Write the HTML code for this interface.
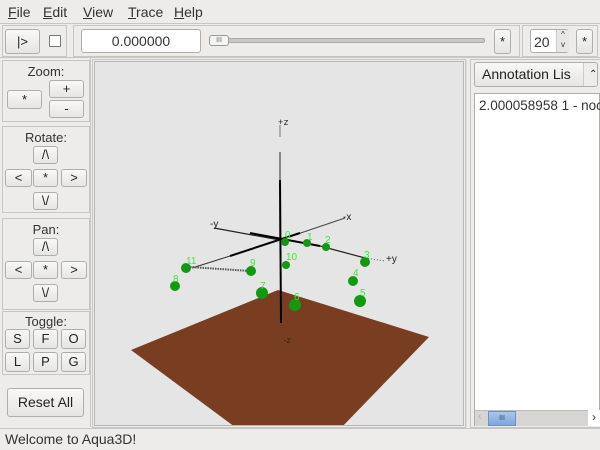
<!DOCTYPE html><html><head><style>
*{box-sizing:border-box}body{margin:0;width:600px;height:450px;background:#edeceb;font-family:"Liberation Sans",sans-serif;font-size:13px;color:#333;position:relative;overflow:hidden}
.a{position:absolute}
.btn{position:absolute;background:linear-gradient(#f8f8f7,#e6e5e3);border:1px solid #b0aeaa;border-radius:3px;text-align:center;font-size:13px;color:#222}
.grp{position:absolute;border:1px solid #c8c6c2;left:2px;width:88px}
.lbl{position:absolute;width:100%;text-align:center;font-size:13px}
u{text-decoration:underline}
</style></head><body>
<div class="a" style="left:0;top:0;width:600px;height:24px;background:#edecea;font-size:14px">
<span class="a" style="left:8px;top:4px"><u>F</u>ile</span><span class="a" style="left:43px;top:4px"><u>E</u>dit</span><span class="a" style="left:83px;top:4px"><u>V</u>iew</span><span class="a" style="left:128px;top:4px"><u>T</u>race</span><span class="a" style="left:174px;top:4px"><u>H</u>elp</span></div>
<div class="a" style="left:0;top:23px;width:600px;height:35px;border-top:1px solid #c8c6c2;border-bottom:1px solid #c8c6c2"></div>
<div class="a" style="left:2px;top:25px;width:65px;height:32px;border:1px solid #c8c6c2"></div>
<div class="a" style="left:73px;top:25px;width:447px;height:32px;border:1px solid #c8c6c2"></div>
<div class="a" style="left:522px;top:25px;width:76px;height:32px;border:1px solid #c8c6c2"></div>
<div class="btn" style="left:5px;top:29px;width:35px;height:25px;line-height:23px">|&gt;</div>
<div class="a" style="left:49px;top:35px;width:12px;height:12px;border:1px solid #777;background:#fff;border-radius:1px"></div>
<div class="a" style="left:81px;top:29px;width:120px;height:24px;border:1px solid #b0aeaa;border-radius:3px;background:#fff;text-align:center;line-height:22px;font-size:14px">0.000000</div>
<div class="a" style="left:210px;top:38px;width:275px;height:5px;background:#c9c8c5;border:1px solid #aaa;border-radius:2px"></div>
<div class="a" style="left:209px;top:35px;width:20px;height:11px;background:#f4f4f3;border:1px solid #999;border-radius:3px;font-size:7px;text-align:center;line-height:9px;color:#666">III</div>
<div class="btn" style="left:494px;top:29px;width:17px;height:25px;line-height:23px">*</div>
<div class="a" style="left:530px;top:29px;width:39px;height:24px;border:1px solid #b0aeaa;border-radius:3px;background:#fff"><span class="a" style="left:3px;top:4px;font-size:14px">20</span><div class="a" style="left:25px;top:0;width:13px;height:22px;background:#e8e7e5;border-left:1px solid #ccc;font-size:8px;text-align:center;line-height:10px">^<br>v</div></div>
<div class="btn" style="left:576px;top:29px;width:17px;height:25px;line-height:23px">*</div>
<!-- left -->
<div class="grp" style="top:60px;height:62px"><div class="lbl" style="top:3px">Zoom:</div></div>
<div class="btn" style="left:7px;top:90px;width:35px;height:19px;line-height:17px">*</div>
<div class="btn" style="left:49px;top:80px;width:35px;height:18px;line-height:16px">+</div>
<div class="btn" style="left:49px;top:100px;width:35px;height:18px;line-height:16px">-</div>
<div class="grp" style="top:126px;height:87px"><div class="lbl" style="top:3px">Rotate:</div></div>
<div class="btn" style="left:33px;top:146px;width:25px;height:18px;line-height:16px">/\</div>
<div class="btn" style="left:5px;top:169px;width:27px;height:18px;line-height:16px">&lt;</div>
<div class="btn" style="left:33px;top:169px;width:25px;height:18px;line-height:16px">*</div>
<div class="btn" style="left:61px;top:169px;width:26px;height:18px;line-height:16px">&gt;</div>
<div class="btn" style="left:33px;top:192px;width:25px;height:18px;line-height:16px">\/</div>
<div class="grp" style="top:218px;height:92px"><div class="lbl" style="top:3px">Pan:</div></div>
<div class="btn" style="left:33px;top:238px;width:25px;height:18px;line-height:16px">/\</div>
<div class="btn" style="left:5px;top:261px;width:27px;height:18px;line-height:16px">&lt;</div>
<div class="btn" style="left:33px;top:261px;width:25px;height:18px;line-height:16px">*</div>
<div class="btn" style="left:61px;top:261px;width:26px;height:18px;line-height:16px">&gt;</div>
<div class="btn" style="left:33px;top:284px;width:25px;height:18px;line-height:16px">\/</div>
<div class="grp" style="top:311px;height:64px"><div class="lbl" style="top:2px">Toggle:</div></div>
<div class="btn" style="left:5px;top:329px;width:25px;height:20px;line-height:18px">S</div>
<div class="btn" style="left:33px;top:329px;width:25px;height:20px;line-height:18px">F</div>
<div class="btn" style="left:61px;top:329px;width:25px;height:20px;line-height:18px">O</div>
<div class="btn" style="left:5px;top:352px;width:25px;height:20px;line-height:18px">L</div>
<div class="btn" style="left:33px;top:352px;width:25px;height:20px;line-height:18px">P</div>
<div class="btn" style="left:61px;top:352px;width:25px;height:20px;line-height:18px">G</div>
<div class="btn" style="left:7px;top:388px;width:77px;height:29px;line-height:27px;font-size:14px">Reset All</div>
<div class="a" style="left:0;top:58px;width:91px;height:369px;border-right:1px solid #c8c6c2"></div>
<!-- viewport -->
<div class="a" style="left:92px;top:59px;width:374px;height:369px;border:1px solid #c8c6c2"></div>
<div class="a" style="left:94px;top:61px;width:370px;height:365px;border:1px solid #b8b6b2;background:#e5e5e5;overflow:hidden">
<svg width="370" height="365" viewBox="94 61 370 365" style="position:absolute;left:-1px;top:-1px">
<polygon points="131,350 278,290 429,337 339,430 239,430" fill="#793d21"/>
<line x1="280" y1="125" x2="280" y2="137" stroke="#777" stroke-width="1"/>
<line x1="280" y1="152" x2="280" y2="240" stroke="#555" stroke-width="1.3"/>
<line x1="280" y1="180" x2="281" y2="323" stroke="#000" stroke-width="2"/>
<text x="278" y="125" font-size="9" font-family="Liberation Mono,monospace" fill="#222">+z</text>
<line x1="214" y1="228" x2="280" y2="240" stroke="#222" stroke-width="1.2"/>
<line x1="250" y1="233" x2="320" y2="246" stroke="#000" stroke-width="2"/>
<line x1="320" y1="246" x2="365" y2="258" stroke="#222" stroke-width="1.2"/>
<line x1="365" y1="258" x2="385" y2="261" stroke="#555" stroke-dasharray="1,2"/>
<text x="210" y="227" font-size="10" fill="#222">-y</text>
<text x="386" y="262" font-size="10" fill="#222">+y</text>
<line x1="345" y1="218" x2="280" y2="240" stroke="#444" stroke-width="1"/>
<line x1="300" y1="233" x2="230" y2="256" stroke="#000" stroke-width="2"/>
<line x1="230" y1="256" x2="192" y2="268" stroke="#333" stroke-width="1"/>
<text x="343" y="220" font-size="10" fill="#222">-x</text>
<line x1="190" y1="267" x2="250" y2="271" stroke="#555" stroke-width="2" stroke-dasharray="1.5,1"/>
<text x="284" y="343" font-size="8" fill="#222">-z</text>
<g fill="#119911">
<circle cx="285" cy="242" r="4"/><circle cx="307" cy="243" r="4"/><circle cx="326" cy="247" r="4"/><circle cx="365" cy="262" r="5"/><circle cx="353" cy="281" r="5"/><circle cx="360" cy="301" r="6"/><circle cx="295" cy="305" r="6"/><circle cx="262" cy="293" r="6"/><circle cx="175" cy="286" r="5"/><circle cx="251" cy="271" r="5"/><circle cx="286" cy="265" r="4"/><circle cx="186" cy="268" r="5"/></g>
<g fill="#33ee33" font-size="10">
<text x="285" y="238">0</text><text x="307" y="240">1</text><text x="325" y="243">2</text><text x="364" y="258">3</text><text x="353" y="276">4</text><text x="360" y="296">5</text><text x="294" y="300">6</text><text x="260" y="289">7</text><text x="173" y="282">8</text><text x="250" y="266">9</text><text x="286" y="260">10</text><text x="186" y="264">11</text></g>
</svg></div>
<div class="a" style="left:466px;top:59px;width:5px;height:369px;border-left:1px solid #ddd"></div>
<!-- right -->
<div class="a" style="left:470px;top:59px;width:130px;height:369px;border:1px solid #c8c6c2;border-right:none"></div>
<div class="btn" style="left:474px;top:62px;width:124px;height:25px;text-align:left;padding-left:7px;line-height:23px;font-size:14px;overflow:hidden;white-space:nowrap">Annotation Lis<span class="a" style="left:108px;top:0;height:23px;border-left:1px solid #ccc;padding-left:5px;background:#eeedeb;font-size:10px">⌃</span></div>
<div class="a" style="left:474px;top:93px;width:126px;height:333px;border:1px solid #b0aeaa;background:#fff"><span class="a" style="left:4px;top:4px;font-size:13.5px;white-space:nowrap">2.000058958 1 - noc</span>
<div class="a" style="left:0;top:316px;width:125px;height:16px;background:#d6d5d2;border-top:1px solid #bbb"></div>
<div class="a" style="left:13px;top:317px;width:28px;height:15px;background:linear-gradient(#a9c6ec,#7ea6dc);border:1px solid #6b91c7;font-size:7px;text-align:center;line-height:13px;color:#345">III</div>
<span class="a" style="left:3px;top:317px;font-size:10px;color:#aaa">‹</span><span class="a" style="left:113px;top:316px;font-size:12px;background:#fff;width:12px;height:16px;text-align:center">›</span></div>
<div class="a" style="left:0;top:428px;width:600px;height:22px;border-top:1px solid #c8c6c2;font-size:14px;padding:2px 5px">Welcome to Aqua3D!</div>
</body></html>
